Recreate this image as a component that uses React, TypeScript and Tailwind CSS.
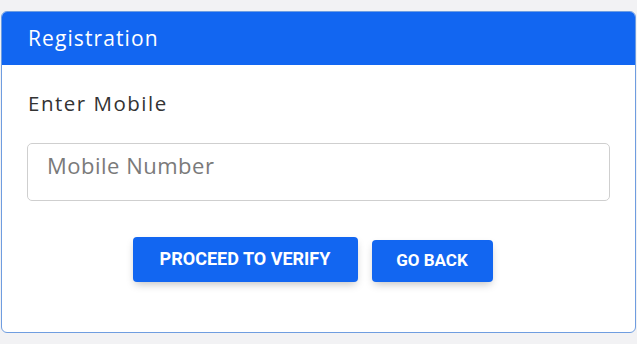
import React from 'react';

const App: React.FC = () => {
  return (
    <div className="min-h-screen bg-[#f2f2f4] pt-[11px] px-[1px] pb-[10px]">
      <div className="bg-white border border-[#6f9de0] rounded-[6px] overflow-hidden">
        <div className="bg-[#1266f1] h-[53px] flex items-center px-[26px]">
          <h1 className="text-white text-[21px] font-['Open_Sans',sans-serif] tracking-[1.1px]">Registration</h1>
        </div>

        <div className="px-[25px] pt-[24px] pb-[50px]">
          <p className="text-[#333333] text-[20.5px] leading-[28px] font-['Open_Sans',sans-serif] tracking-[1.5px] ml-[1px]">Enter Mobile</p>

          <input
            type="text"
            placeholder="Mobile Number"
            className="mt-[26px] w-full h-[58px] border border-[#cfcfcf] rounded-[5px] px-[19px] pb-[14px] text-[22px] font-['Open_Sans',sans-serif] tracking-[0.5px] text-[#444] placeholder:text-[#7a7a7a] outline-none"
          />

          <div className="mt-[36px] flex items-end justify-center gap-[14px] pr-[12px]">
            <button className="h-[45px] w-[225px] bg-[#1266f1] rounded-[4px] text-white text-[18px] font-bold uppercase font-['Roboto',sans-serif] shadow-[0_4px_9px_-2px_rgba(0,0,0,0.25)] pb-[2px]">
              Proceed to verify
            </button>
            <button className="h-[42px] w-[121px] bg-[#1266f1] rounded-[4px] text-white text-[17px] font-bold uppercase font-['Roboto',sans-serif] shadow-[0_4px_9px_-2px_rgba(0,0,0,0.25)]">
              Go back
            </button>
          </div>
        </div>
      </div>
    </div>
  );
};

export default App;
